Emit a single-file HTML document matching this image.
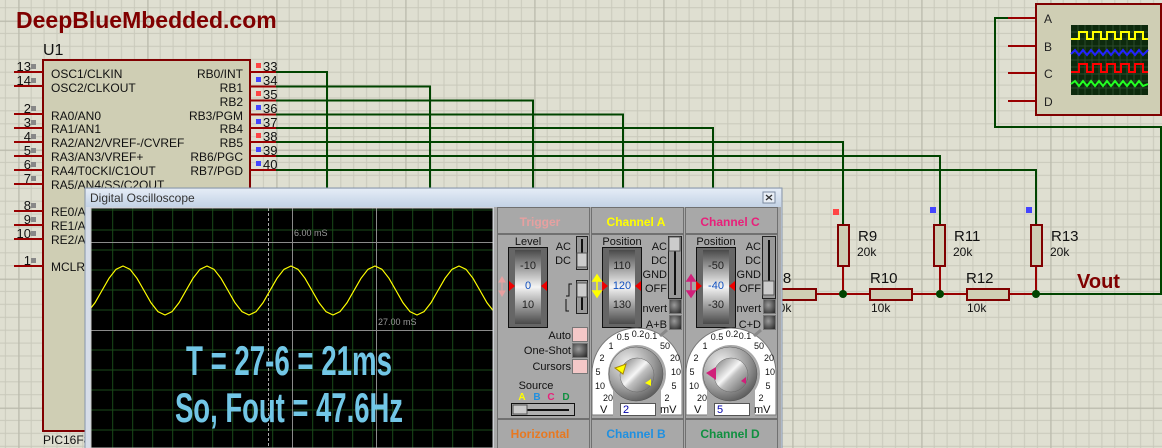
<!DOCTYPE html>
<html><head><meta charset="utf-8"><style>
html,body{margin:0;padding:0;background:#dfdfd1;}
svg{display:block;font-family:"Liberation Sans",sans-serif;}
</style></head><body>
<svg width="1162" height="448" viewBox="0 0 1162 448" xmlns="http://www.w3.org/2000/svg">
<defs>
<pattern id="g" x="18.3" y="20.6" width="129" height="129" patternUnits="userSpaceOnUse">
<rect width="129" height="129" fill="#dfdfd1"/>
<g stroke="#c9c9bb" stroke-width="1">
<path d="M12.9 0V129M25.8 0V129M38.7 0V129M51.6 0V129M64.5 0V129M77.4 0V129M90.3 0V129M103.2 0V129M116.1 0V129"/>
<path d="M0 12.9H129M0 25.8H129M0 38.7H129M0 51.6H129M0 64.5H129M0 77.4H129M0 90.3H129M0 103.2H129M0 116.1H129"/>
</g>
<path d="M0.5 0V129M0 0.5H129" stroke="#b9b9ab" stroke-width="1.5"/>
</pattern>
<linearGradient id="drum" x1="0" y1="0" x2="0" y2="1">
<stop offset="0" stop-color="#4a4a4a"/><stop offset="0.5" stop-color="#f4f4f4"/><stop offset="1" stop-color="#4a4a4a"/>
</linearGradient>
<linearGradient id="tb" x1="0" y1="0" x2="0" y2="1">
<stop offset="0" stop-color="#e4ecf6"/><stop offset="1" stop-color="#c3d2e5"/>
</linearGradient>
<radialGradient id="knob" cx="0.35" cy="0.3" r="0.8">
<stop offset="0" stop-color="#f0f0f0"/><stop offset="0.6" stop-color="#9a9a9a"/><stop offset="1" stop-color="#505050"/>
</radialGradient>
<linearGradient id="metal" x1="0" y1="0" x2="1" y2="1">
<stop offset="0" stop-color="#707070"/><stop offset="0.45" stop-color="#f6f6f6"/><stop offset="0.55" stop-color="#c0c0c0"/><stop offset="1" stop-color="#5a5a5a"/>
</linearGradient>
<radialGradient id="btn" cx="0.4" cy="0.4" r="0.7"><stop offset="0" stop-color="#9a9a9a"/><stop offset="1" stop-color="#303030"/></radialGradient>
<clipPath id="scr"><rect x="91" y="208" width="402" height="240"/></clipPath>
</defs>
<rect width="1162" height="448" fill="url(#g)"/>

<text x="16" y="28" font-size="23" font-weight="bold" fill="#800000">DeepBlueMbedded.com</text>
<text x="43" y="55" font-size="16" fill="#111">U1</text>

<g stroke="#004400" stroke-width="2" fill="none">
<path d="M276 72H327V448"/>
<path d="M276 86.5H430V448"/>
<path d="M276 100.5H533V448"/>
<path d="M276 114.5H623V448"/>
<path d="M276 128H713V448"/>
<path d="M276 142H843V224"/>
<path d="M276 156H940V224"/>
<path d="M276 170H1036V224"/>
<path d="M1036 294H1161V127H995V18H1008"/>
</g>

<rect x="43" y="60" width="207" height="371" fill="#cfceb4" stroke="#800000" stroke-width="2"/>
<g stroke="#990000" stroke-width="2">
<path d="M14 72H43M14 86H43M14 114H43M14 128H43M14 142H43M14 156H43M14 170H43M14 184H43M14 211H43M14 225H43M14 239H43M14 266H43"/>
<path d="M250 72H276M250 86.5H276M250 100.5H276M250 114.5H276M250 128H276M250 142H276M250 156H276M250 170H276"/>
</g>
<g fill="#888">
<rect x="31" y="64" width="5" height="5"/><rect x="31" y="78" width="5" height="5"/><rect x="31" y="106" width="5" height="5"/><rect x="31" y="120" width="5" height="5"/><rect x="31" y="134" width="5" height="5"/><rect x="31" y="148" width="5" height="5"/><rect x="31" y="162" width="5" height="5"/><rect x="31" y="176" width="5" height="5"/><rect x="31" y="203" width="5" height="5"/><rect x="31" y="217" width="5" height="5"/><rect x="31" y="231" width="5" height="5"/><rect x="31" y="258" width="5" height="5"/>
</g>
<g font-size="13" fill="#111" text-anchor="end">
<text x="31" y="71">13</text><text x="31" y="85">14</text><text x="31" y="113">2</text><text x="31" y="127">3</text><text x="31" y="141">4</text><text x="31" y="155">5</text><text x="31" y="169">6</text><text x="31" y="183">7</text><text x="31" y="210">8</text><text x="31" y="224">9</text><text x="31" y="238">10</text><text x="31" y="265">1</text>
</g>
<g font-size="12" fill="#111">
<text x="51" y="78">OSC1/CLKIN</text><text x="51" y="92">OSC2/CLKOUT</text>
<text x="51" y="120">RA0/AN0</text><text x="51" y="133">RA1/AN1</text><text x="51" y="147">RA2/AN2/VREF-/CVREF</text><text x="51" y="161">RA3/AN3/VREF+</text><text x="51" y="175">RA4/T0CKI/C1OUT</text><text x="51" y="189">RA5/AN4/SS/C2OUT</text>
<text x="51" y="216">RE0/AN5</text><text x="51" y="230">RE1/AN6</text><text x="51" y="244">RE2/AN7</text><text x="51" y="271">MCLR/VPP</text>
<text x="43" y="444">PIC16F887</text>
</g>
<g font-size="12" fill="#111" text-anchor="end">
<text x="243" y="78">RB0/INT</text><text x="243" y="92">RB1</text><text x="243" y="106">RB2</text><text x="243" y="120">RB3/PGM</text><text x="243" y="133">RB4</text><text x="243" y="147">RB5</text><text x="243" y="161">RB6/PGC</text><text x="243" y="175">RB7/PGD</text>
</g>
<g>
<rect x="256" y="63" width="5" height="5" fill="#f44"/><rect x="256" y="77" width="5" height="5" fill="#44f"/><rect x="256" y="91" width="5" height="5" fill="#f44"/><rect x="256" y="105" width="5" height="5" fill="#44f"/><rect x="256" y="119" width="5" height="5" fill="#44f"/><rect x="256" y="133" width="5" height="5" fill="#f44"/><rect x="256" y="147" width="5" height="5" fill="#44f"/><rect x="256" y="161" width="5" height="5" fill="#44f"/>
</g>
<g font-size="13" fill="#111">
<text x="263" y="71">33</text><text x="263" y="85">34</text><text x="263" y="99">35</text><text x="263" y="113">36</text><text x="263" y="127">37</text><text x="263" y="141">38</text><text x="263" y="155">39</text><text x="263" y="169">40</text>
</g>

<g stroke="#990000" stroke-width="2" fill="none">
<path d="M843 224V294M940 224V294M1036 224V294M760 294H1036"/>
<path d="M1008 18H1036M1008 46H1036M1008 73H1036M1008 101H1036"/>
</g>
<g fill="#cfceb4" stroke="#800000" stroke-width="2">
<rect x="838" y="225" width="11" height="41"/><rect x="934" y="225" width="11" height="41"/><rect x="1031" y="225" width="11" height="41"/>
<rect x="770" y="289" width="46" height="11"/><rect x="870" y="289" width="42" height="11"/><rect x="967" y="289" width="42" height="11"/>
</g>
<g fill="#004400"><circle cx="843" cy="294" r="4"/><circle cx="940" cy="294" r="4"/><circle cx="1036" cy="294" r="4"/></g>
<rect x="833" y="209" width="6" height="6" fill="#f44"/><rect x="930" y="207" width="6" height="6" fill="#44f"/><rect x="1026" y="207" width="6" height="6" fill="#44f"/>
<g fill="#111">
<text x="858" y="241" font-size="15">R9</text><text x="857" y="256" font-size="12">20k</text>
<text x="954" y="241" font-size="15">R11</text><text x="953" y="256" font-size="12">20k</text>
<text x="1051" y="241" font-size="15">R13</text><text x="1050" y="256" font-size="12">20k</text>
<text x="870" y="283" font-size="15">R10</text><text x="871" y="312" font-size="12">10k</text>
<text x="966" y="283" font-size="15">R12</text><text x="967" y="312" font-size="12">10k</text>
<text x="772" y="283" font-size="15">R8</text><text x="772" y="312" font-size="12">10k</text>
</g>
<text x="1077" y="288" font-size="20" font-weight="bold" fill="#800000">Vout</text>

<rect x="1036" y="4" width="125" height="111" fill="#cfceb4" stroke="#800000" stroke-width="2"/>
<g font-size="12" fill="#222"><text x="1044" y="23">A</text><text x="1044" y="51">B</text><text x="1044" y="78">C</text><text x="1044" y="106">D</text></g>
<rect x="1071" y="25" width="77" height="70" fill="#0d2a0d"/>
<g stroke="#2c4a2c" stroke-width="1"><path d="M1078 25V95M1085 25V95M1092 25V95M1099 25V95M1106 25V95M1113 25V95M1120 25V95M1127 25V95M1134 25V95M1141 25V95M1071 32H1148M1071 39H1148M1071 46H1148M1071 53H1148M1071 60H1148M1071 67H1148M1071 74H1148M1071 81H1148M1071 88H1148"/></g>
<g fill="none" stroke-width="2">
<path d="M1071 39H1079V32H1087V39H1093V32H1101V39H1107V32H1115V39H1121V32H1129V39H1135V32H1143V39H1148" stroke="#ff0"/>
<path d="M1071 54L1075 50L1079 55L1083 50L1087 55L1091 50L1095 55L1099 50L1103 55L1107 50L1111 55L1115 50L1119 55L1123 50L1127 55L1131 50L1135 55L1139 50L1143 55L1148 50" stroke="#22f"/>
<path d="M1071 72H1079V64H1087V72H1093V64H1101V72H1107V64H1115V72H1121V64H1129V72H1135V64H1143V72H1148" stroke="#f00"/>
<path d="M1071 84L1075 81L1079 86L1083 81L1087 86L1091 81L1095 86L1099 81L1103 86L1107 81L1111 86L1115 81L1119 86L1123 81L1127 86L1131 81L1135 86L1139 81L1143 86L1148 84" stroke="#2f2"/>
</g>

<rect x="85" y="188" width="697" height="262" fill="#d6dde8" stroke="#8595aa"/>
<rect x="86" y="189" width="695" height="18" fill="url(#tb)"/>
<text x="90" y="202" font-size="12" fill="#333">Digital Oscilloscope</text>
<rect x="763" y="192" width="12" height="11" fill="#e8eef6" stroke="#7a8aa0"/>
<path d="M766 195L772 200M772 195L766 200" stroke="#333" stroke-width="1.3"/>

<rect x="91" y="208" width="402" height="240" fill="#000"/>
<g clip-path="url(#scr)">
<g stroke="#1a4a1a" stroke-width="1">
<path d="M112.7 208V448M132.7 208V448M152.7 208V448M172.7 208V448M192.7 208V448M212.7 208V448M232.7 208V448M252.7 208V448M272.7 208V448M312.7 208V448M332.7 208V448M352.7 208V448M372.7 208V448M392.7 208V448M412.7 208V448M432.7 208V448M452.7 208V448M472.7 208V448"/>
<path d="M91 210H493M91 230H493M91 250H493M91 270H493M91 290H493M91 310H493M91 350H493M91 370H493M91 390H493M91 410H493M91 430H493"/>
</g>
<path d="M292.5 208V448M376.5 208V448M91 242.5H493M91 330.5H493" stroke="#8a8a8a" stroke-width="1"/>
<path d="M268.5 208V448" stroke="#aaa" stroke-width="1" stroke-dasharray="3,2"/>
<text x="294" y="236" font-size="9" fill="#999">6.00 mS</text>
<text x="378" y="325" font-size="9" fill="#999">27.00 mS</text>
<polyline fill="none" stroke="#ffff00" stroke-width="1.2" points="81,315 88,311.7 95,302.8 102,290.5 109,278.3 116,269.3 123,266 130,269.3 137,278.3 144,290.5 151,302.8 158,311.7 165,315 172,311.7 179,302.8 186,290.5 193,278.3 200,269.3 207,266 214,269.3 221,278.3 228,290.5 235,302.8 242,311.7 249,315 256,311.7 263,302.8 270,290.5 277,278.3 284,269.3 291,266 298,269.3 305,278.3 312,290.5 319,302.8 326,311.7 333,315 340,311.7 347,302.8 354,290.5 361,278.3 368,269.3 375,266 382,269.3 389,278.3 396,290.5 403,302.8 410,311.7 417,315 424,311.7 431,302.8 438,290.5 445,278.3 452,269.3 459,266 466,269.3 473,278.3 480,290.5 487,302.8 494,311.7"/>
<text x="186" y="375" font-size="42" font-weight="bold" fill="#72c6e6" textLength="206" lengthAdjust="spacingAndGlyphs">T = 27-6 = 21ms</text>
<text x="175" y="422" font-size="42" font-weight="bold" fill="#72c6e6" textLength="228" lengthAdjust="spacingAndGlyphs">So, Fout = 47.6Hz</text>
</g>
<rect x="91" y="208" width="402" height="240" fill="none" stroke="#c8c8c8"/>

<rect x="494" y="207" width="287" height="241" fill="#a8a8a8"/>
<g fill="none" stroke="#707070">
<rect x="497.5" y="207.5" width="92" height="26"/><rect x="591.5" y="207.5" width="92" height="26"/><rect x="685.5" y="207.5" width="92" height="26"/>
<rect x="497.5" y="234.5" width="92" height="184"/><rect x="591.5" y="234.5" width="92" height="184"/><rect x="685.5" y="234.5" width="92" height="184"/>
<rect x="497.5" y="419.5" width="92" height="30"/><rect x="591.5" y="419.5" width="92" height="30"/><rect x="685.5" y="419.5" width="92" height="30"/>
</g>
<g font-size="12" font-weight="bold" text-anchor="middle">
<text x="540" y="226" fill="#e6a0a0">Trigger</text>
<text x="636" y="226" fill="#ffff00">Channel A</text>
<text x="730" y="226" fill="#e8207a">Channel C</text>
<text x="540" y="438" fill="#e87820">Horizontal</text>
<text x="636" y="438" fill="#2090e0">Channel B</text>
<text x="730" y="438" fill="#109040">Channel D</text>
</g>

<g font-size="11" fill="#111">
<text x="528" y="245" text-anchor="middle">Level</text>
<text x="571" y="250" text-anchor="end">AC</text><text x="571" y="264" text-anchor="end">DC</text>
<text x="571" y="339" text-anchor="end">Auto</text><text x="571" y="354" text-anchor="end">One-Shot</text><text x="571" y="370" text-anchor="end">Cursors</text>
<text x="536" y="389" text-anchor="middle">Source</text>
</g>
<g font-size="10" font-weight="bold" text-anchor="middle">
<text x="522" y="400" fill="#ff0">A</text><text x="537" y="400" fill="#2090e0">B</text><text x="551" y="400" fill="#e8207a">C</text><text x="566" y="400" fill="#109040">D</text>
</g>
<rect x="508.5" y="247.5" width="39" height="80" fill="#666" stroke="#111"/>
<rect x="515" y="250" width="26" height="74" fill="url(#drum)"/>
<g font-size="11" fill="#222" text-anchor="middle"><text x="528" y="269">-10</text><text x="528" y="289" fill="#1050c0">0</text><text x="528" y="308">10</text></g>
<path d="M509 281L515 286L509 291ZM547 281L541 286L547 291Z" fill="#e00"/>
<path d="M502 277L499 282H505ZM502 296L499 291H505ZM502 282V291" fill="#e8a0a0" stroke="#e8a0a0"/>
<rect x="576.5" y="236.5" width="11" height="33" fill="#999" stroke="#222"/><rect x="581" y="239" width="2" height="27" fill="#111"/><rect x="577" y="253" width="10" height="14" fill="#ccc" stroke="#555"/>
<rect x="576.5" y="280.5" width="11" height="33" fill="#999" stroke="#222"/><rect x="581" y="283" width="2" height="27" fill="#111"/><rect x="577" y="283" width="10" height="14" fill="#ccc" stroke="#555"/>
<path d="M572 284H569V296H566M566 299V311H569" fill="none" stroke="#111"/>
<rect x="572.5" y="327.5" width="15" height="14" fill="#f4c8c8" stroke="#777"/>
<rect x="572.5" y="343.5" width="15" height="14" fill="url(#btn)" stroke="#777"/>
<rect x="572.5" y="359.5" width="15" height="14" fill="#f4c8c8" stroke="#777"/>
<rect x="511.5" y="403.5" width="63" height="12" fill="#b0b0b0" stroke="#111"/><rect x="522" y="409" width="47" height="2" fill="#111"/><rect x="513" y="405" width="14" height="9" fill="#ccc" stroke="#555"/>

<g id="chA">
<g font-size="11" fill="#111">
<text x="622" y="245" text-anchor="middle">Position</text>
<text x="667" y="250" text-anchor="end">AC</text><text x="667" y="264" text-anchor="end">DC</text><text x="667" y="278" text-anchor="end">GND</text><text x="667" y="292" text-anchor="end">OFF</text>
<text x="667" y="312" text-anchor="end">Invert</text>
</g>
<rect x="602.5" y="247.5" width="39" height="80" fill="#666" stroke="#111"/>
<rect x="609" y="250" width="26" height="74" fill="url(#drum)"/>
<path d="M602 281L608 286L602 291ZM641 281L635 286L641 291Z" fill="#e00"/>
<rect x="668.5" y="236.5" width="13" height="62" fill="#999" stroke="#222"/><rect x="674" y="240" width="2" height="55" fill="#111"/>
<rect x="669.5" y="315.5" width="12" height="14" fill="url(#btn)" stroke="#777"/>
<rect x="669.5" y="299.5" width="12" height="14" fill="url(#btn)" stroke="#777"/>
<path d="M592 415V373A45 45 0 0 1 682 373V415Z" fill="#fff" stroke="#777"/>
<circle cx="637" cy="374" r="29" fill="#a8a8a8"/>
<rect x="613" y="374" width="48" height="42" fill="#a8a8a8"/>
<path d="M660 336L667 330" stroke="#888" stroke-width="3"/>
<circle cx="636" cy="374" r="27" fill="url(#knob)" stroke="#555" stroke-width="0.5"/>
<circle cx="637" cy="375" r="17" fill="url(#metal)" stroke="#666" stroke-width="0.5"/>
<rect x="620.5" y="403.5" width="35" height="12" fill="#fff" stroke="#555"/>
<g font-size="9" fill="#111" text-anchor="middle">
<text x="623" y="340">0.5</text><text x="638" y="337">0.2</text><text x="651" y="339">0.1</text><text x="611" y="349">1</text><text x="602" y="361">2</text><text x="598" y="375">5</text><text x="600" y="389">10</text><text x="608" y="401">20</text>
<text x="665" y="349">50</text><text x="675" y="361">20</text><text x="676" y="375">10</text><text x="674" y="389">5</text><text x="667" y="401">2</text>
</g>
<g font-size="11" fill="#111"><text x="600" y="413">V</text><text x="660" y="413">mV</text></g>
</g>
<g font-size="11" fill="#222" text-anchor="middle"><text x="622" y="269">110</text><text x="622" y="289" fill="#1050c0">120</text><text x="622" y="308">130</text></g>
<rect x="669" y="237" width="11" height="14" fill="#ccc" stroke="#555"/>
<text x="667" y="328" font-size="11" fill="#111" text-anchor="end">A+B</text>
<path d="M597 275L593 281H601ZM597 297L593 291H601ZM597 281V291" fill="#ff0" stroke="#ff0" stroke-width="1.5"/>
<path d="M615 368L626 364L623 374Z" fill="#ff0" stroke="#a80"/>
<path d="M651 379L645 383L651 386Z" fill="#ff0"/>
<text x="623" y="413" font-size="11" fill="#00a">2</text>

<use href="#chA" x="94"/>
<g font-size="11" fill="#222" text-anchor="middle"><text x="716" y="269">-50</text><text x="716" y="289" fill="#1050c0">-40</text><text x="716" y="308">-30</text></g>
<rect x="763" y="281" width="11" height="14" fill="#ccc" stroke="#555"/>
<text x="761" y="328" font-size="11" fill="#111" text-anchor="end">C+D</text>
<path d="M691 275L687 281H695ZM691 297L687 291H695ZM691 281V291" fill="#d0207a" stroke="#d0207a" stroke-width="1.5"/>
<path d="M706 373L716 367L716 380Z" fill="#d0207a"/>
<path d="M746 377L741 381L746 384Z" fill="#d0207a"/>
<text x="717" y="413" font-size="11" fill="#00a">5</text>
</svg>
</body></html>
